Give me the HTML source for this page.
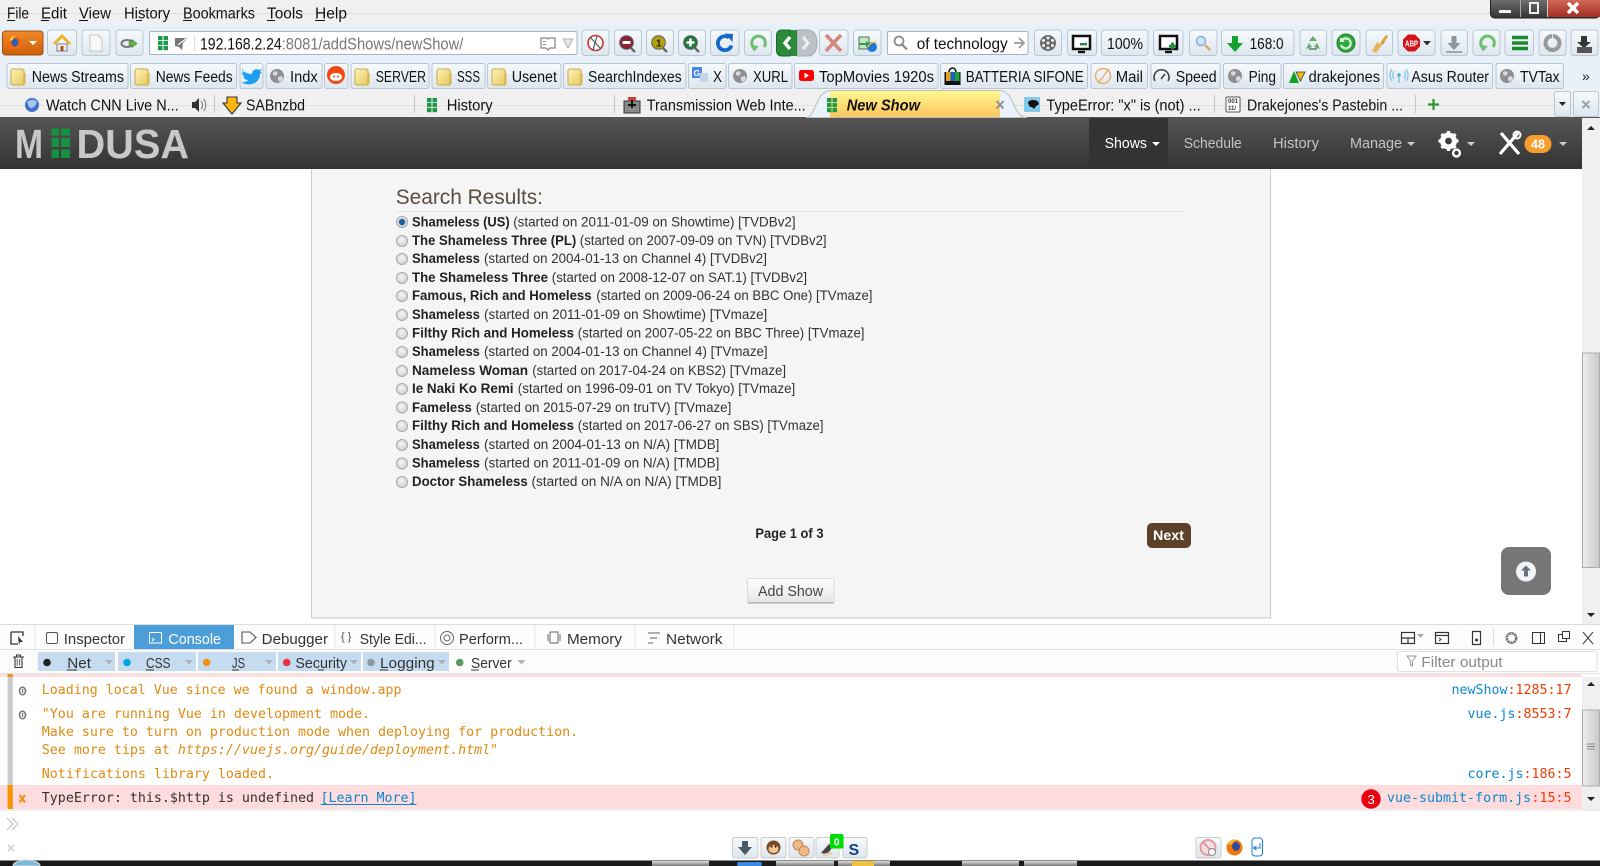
<!DOCTYPE html>
<html lang="en"><head><meta charset="utf-8"><title>New Show</title>
<style>
html,body{margin:0;padding:0;width:1600px;height:866px;overflow:hidden;background:#fff}
svg{display:block}
text{font-family:"Liberation Sans",sans-serif;white-space:pre}
.m{font-size:15.5px;fill:#111}
.b{font-size:15.5px;fill:#111}
.tb{font-size:15.5px;fill:#111}
.r{font-size:13.5px;fill:#333}
.rb{font-size:13.5px;font-weight:bold;fill:#222}
.n{font-size:14.5px;fill:#c4c4c4}
.d{font-size:15px;fill:#333}
.c{font-family:"DejaVu Sans Mono","Liberation Mono",monospace;font-size:13.3px;fill:#e08a12}
.s{font-family:"DejaVu Sans Mono","Liberation Mono",monospace;font-size:13.3px;fill:#0a88cc}
.o{font-family:"DejaVu Sans Mono","Liberation Mono",monospace;font-size:13.3px;fill:#f13c00}
</style></head><body>
<svg width="1600" height="866" viewBox="0 0 1600 866" xmlns="http://www.w3.org/2000/svg">
<defs>
<linearGradient id="btn" x1="0" y1="0" x2="0" y2="1"><stop offset="0" stop-color="#f6fafd"/><stop offset="1" stop-color="#dde6ee"/></linearGradient>
<linearGradient id="ffb" x1="0" y1="0" x2="0" y2="1"><stop offset="0" stop-color="#f08a2a"/><stop offset="1" stop-color="#cf5f08"/></linearGradient>
<linearGradient id="hdr" x1="0" y1="0" x2="0" y2="1"><stop offset="0" stop-color="#555"/><stop offset="1" stop-color="#333"/></linearGradient>
<linearGradient id="yel" x1="0" y1="0" x2="0" y2="1"><stop offset="0" stop-color="#fff68e"/><stop offset="1" stop-color="#fdc661"/></linearGradient>
<linearGradient id="fold" x1="0" y1="0" x2="1" y2="1"><stop offset="0" stop-color="#fdf3b8"/><stop offset="1" stop-color="#e8c860"/></linearGradient>
<linearGradient id="win" x1="0" y1="0" x2="0" y2="1"><stop offset="0" stop-color="#777"/><stop offset="1" stop-color="#333"/></linearGradient>
<linearGradient id="wred" x1="0" y1="0" x2="0" y2="1"><stop offset="0" stop-color="#d26a5c"/><stop offset="1" stop-color="#a32f22"/></linearGradient>
<linearGradient id="add" x1="0" y1="0" x2="0" y2="1"><stop offset="0" stop-color="#fff"/><stop offset="1" stop-color="#e4e4e4"/></linearGradient>
<linearGradient id="scr" x1="0" y1="0" x2="1" y2="0"><stop offset="0" stop-color="#eee"/><stop offset="1" stop-color="#c8c8c8"/></linearGradient>
<linearGradient id="tk" x1="0" y1="0" x2="0" y2="1"><stop offset="0" stop-color="#ddd"/><stop offset="1" stop-color="#777"/></linearGradient>
<radialGradient id="rad" cx=".45" cy=".4" r=".7"><stop offset="0" stop-color="#f4f4f4"/><stop offset=".7" stop-color="#d8d8d8"/><stop offset="1" stop-color="#bbb"/></radialGradient>
<g id="folder"><path d="M0 3a2 2 0 0 1 2-2h9a2 2 0 0 1 2 2v14H2a2 2 0 0 1-2-2z" fill="url(#fold)" stroke="#c9a94a"/><rect x="13" y="5" width="1.6" height="11" fill="#d8b850"/></g>
<g id="globe"><circle cx="7" cy="7" r="7" fill="#8d8f92"/><path d="M3 3l3-1 2 2-2 3-3-1zM8 8l4-1 1 3-3 3-2-2z" fill="#d8dadc"/></g>
<g id="grid"><rect x="0" y="0" width="4.5" height="4.2" fill="#1c9a4a"/><rect x="5.5" y="0" width="4.5" height="4.2" fill="#1c9a4a"/><rect x="0" y="5" width="4.5" height="4.2" fill="#1c9a4a"/><rect x="5.5" y="5" width="4.5" height="4.2" fill="#1c9a4a"/><rect x="0" y="10" width="4.5" height="4.2" fill="#1c9a4a"/><rect x="5.5" y="10" width="4.5" height="4.2" fill="#1c9a4a"/></g>
</defs>

<!-- chrome background -->
<rect width="1600" height="23" fill="#f0f0f0"/>
<rect y="13" width="1490" height="1" fill="#e0e0e0"/>
<rect y="23" width="1600" height="66" fill="#e8f1fa"/>
<rect y="89" width="1600" height="29" fill="#f0f0f0"/>
<rect y="105" width="1600" height="1" fill="#e2e2e2"/>
<rect y="117" width="1600" height="1" fill="#555"/>

<!-- menu -->
<text class="m" x="7" y="18.5" textLength="22" lengthAdjust="spacingAndGlyphs">File</text>
<text class="m" x="41" y="18.5" textLength="26" lengthAdjust="spacingAndGlyphs">Edit</text>
<text class="m" x="79" y="18.5" textLength="32" lengthAdjust="spacingAndGlyphs">View</text>
<text class="m" x="124" y="18.5" textLength="46" lengthAdjust="spacingAndGlyphs">History</text>
<text class="m" x="183" y="18.5" textLength="72" lengthAdjust="spacingAndGlyphs">Bookmarks</text>
<text class="m" x="267" y="18.5" textLength="36" lengthAdjust="spacingAndGlyphs">Tools</text>
<text class="m" x="315" y="18.5" textLength="32" lengthAdjust="spacingAndGlyphs">Help</text>
<path d="M7 20.5h8M41 20.5h8M79 20.5h9M136 20.5h6M183 20.5h9M267 20.5h8M315 20.5h10" stroke="#111" stroke-width="1" fill="none"/>

<!-- window buttons -->
<rect x="1490.5" y="-3" width="109" height="21" rx="4" fill="url(#win)" stroke="#222"/>
<rect x="1547" y="-1" width="53" height="18" fill="url(#wred)"/>
<rect x="1520" y="0" width="1" height="17" fill="#aaa"/><rect x="1547" y="0" width="1" height="17" fill="#ccc"/>
<rect x="1499" y="10" width="12" height="3" fill="#eee"/>
<rect x="1530" y="3" width="8" height="10" fill="none" stroke="#eee" stroke-width="2"/>
<path d="M1568 3l10 10M1578 3l-10 10" stroke="#fff" stroke-width="3.4"/>

<!-- nav toolbar -->
<rect x="2.5" y="31" width="40.500" height="24" rx="3" fill="url(#ffb)" stroke="#9a4d10"/>
<circle cx="14" cy="43" r="7" fill="#f26a10"/><ellipse cx="15" cy="42.500" rx="3.500" ry="4" fill="#2f5fb0"/><path d="M9 41c1-4 4-6 7-5-2 1-3 2-3 4z" fill="#f9c23c"/>
<path d="M29 41h8l-4 4z" fill="#fff"/>
<g fill="url(#btn)" stroke="#bcc6d0">
<rect x="47.500" y="30" width="29" height="25.500" rx="3"/><rect x="82" y="30" width="28" height="25.500" rx="3"/><rect x="116" y="30" width="27" height="25.500" rx="3"/>
<rect x="582" y="30" width="27" height="25.500" rx="3"/><rect x="614.500" y="30" width="27" height="25.500" rx="3"/><rect x="646.500" y="30" width="27" height="25.500" rx="3"/><rect x="678.500" y="30" width="27" height="25.500" rx="3"/><rect x="710.500" y="30" width="28.500" height="25.500" rx="3"/><rect x="744.500" y="30" width="27" height="25.500" rx="3"/>
<rect x="819.500" y="30" width="28.500" height="25.500" rx="3"/><rect x="853.500" y="30" width="27.500" height="25.500" rx="3"/>
<rect x="1034.500" y="30" width="27" height="25.500" rx="3"/><rect x="1067.500" y="30" width="29" height="25.500" rx="3"/><rect x="1101.500" y="30" width="46.500" height="25.500" rx="3"/><rect x="1153.500" y="30" width="29.500" height="25.500" rx="3"/><rect x="1189.500" y="30" width="27.500" height="25.500" rx="3"/><rect x="1221.500" y="30" width="72.500" height="25.500" rx="3"/><rect x="1300" y="30" width="26.500" height="25.500" rx="3"/><rect x="1332" y="30" width="28" height="25.500" rx="3"/><rect x="1366" y="30" width="26.500" height="25.500" rx="3"/><rect x="1398" y="30" width="37" height="25.500" rx="3"/><rect x="1441" y="30" width="26.500" height="25.500" rx="3"/><rect x="1473" y="30" width="27" height="25.500" rx="3"/><rect x="1505" y="30" width="28.500" height="25.500" rx="3"/><rect x="1539" y="30" width="27" height="25.500" rx="3"/><rect x="1571" y="30" width="27" height="25.500" rx="3"/>
</g>
<!-- home/new/link icons -->
<path d="M54 44l8-8 8 8" fill="none" stroke="#eab62c" stroke-width="3"/><rect x="57" y="44" width="10" height="7" fill="#f8f0d8" stroke="#7a78b0"/><rect x="60.500" y="46" width="3" height="5" fill="#a0561c"/>
<path d="M90 35h8l4 4v12H90z" fill="#f8f8f8" stroke="#c4c4c4"/>
<ellipse cx="127" cy="43.500" rx="5.500" ry="3.500" fill="none" stroke="#777" stroke-width="2"/><path d="M129 42h3v-2.500l5 4-5 4v-2h-3z" fill="#6cb84a" stroke="#3d8a2a" stroke-width=".6"/>
<!-- url bar -->
<rect x="149.500" y="31.500" width="427.500" height="23" rx="1.500" fill="#fff" stroke="#a9b4bf"/>
<use href="#grid" x="158" y="36"/>
<path d="M175 38h13l-5 5-1 7-3-3-4-1z" fill="#777"/><path d="M178 45l9-7" stroke="#fff" stroke-width="1.200"/>
<rect x="194" y="35" width="1" height="16" fill="#ddd"/>
<text x="200" y="49.500" font-size="16.500" fill="#111" textLength="81.700" lengthAdjust="spacingAndGlyphs">192.168.2.24</text>
<text x="281.700" y="49.500" font-size="16.500" fill="#777" textLength="181.600" lengthAdjust="spacingAndGlyphs">:8081/addShows/newShow/</text>
<path d="M541 38h6l1 1 1-1h6v10h-5l-2 2-2-2h-5z" fill="#fff" stroke="#888" stroke-width="1.300"/><rect x="543" y="41" width="3" height="1" fill="#888"/><rect x="543" y="44" width="3" height="1" fill="#888"/>
<path d="M563 39h10l-5 9z" fill="#e4e8ec" stroke="#aab2ba"/>
<!-- zoom/reload icons -->
<circle cx="595.500" cy="43" r="7.500" fill="#fff" stroke="#c33" stroke-width="1.600"/><path d="M590 37l11 12M597 36l-4 14" stroke="#555" stroke-width="1.200"/>
<g stroke="#666" stroke-width="2.400"><path d="M631 48l4 4M663 48l4 4M695 48l4 4"/></g>
<circle cx="626.500" cy="42.500" r="6.800" fill="#8c2134" stroke="#5a5a5a"/><rect x="622.500" y="41" width="8" height="3" fill="#fff"/>
<circle cx="658.500" cy="42.500" r="6.800" fill="#b5a209" stroke="#5a5a5a"/><text x="656" y="46.500" font-size="10" font-weight="bold" fill="#222">1</text>
<circle cx="690.500" cy="42.500" r="6.800" fill="#1d7a3f" stroke="#5a5a5a"/><path d="M686.500 42.500h8M690.500 38.500v8" stroke="#fff" stroke-width="2.600"/>
<path d="M729 37.500a7 7 0 1 0 2.500 8" fill="none" stroke="#1568c8" stroke-width="3.800"/><path d="M725 33.500l8 .5-.5 8z" fill="#1568c8"/>
<path d="M764 47a6.800 6.800 0 1 0-10 1" fill="none" stroke="#6cc070" stroke-width="3"/><path d="M750.500 45l8.500 1-5 5.500z" fill="#6cc070"/>
<!-- back fwd -->
<path d="M790 30h-9a5 5 0 0 0-4.500 5v16a5 5 0 0 0 4.500 5h9z" fill="#2c8a3a" stroke="#1e6a2c"/>
<path d="M797 30h10c6 0 10 4 10 13s-4 13-10 13h-10z" fill="#bcc2c6" stroke="#a4aaae"/><rect x="790" y="30" width="7" height="26" fill="#2c8a3a"/>
<path d="M790 37l-5 6 5 6" fill="none" stroke="#fff" stroke-width="3.400"/><path d="M803 37l5 6-5 6" fill="none" stroke="#eef0f2" stroke-width="3"/>
<path d="M826 35l15 16M841 35l-15 16" stroke="#d58880" stroke-width="3.600"/>
<rect x="859" y="37" width="10" height="12" fill="#c9e4c4" stroke="#4a7a58"/><path d="M859 43h7v-2l4 3-4 3v-2h-7z" fill="#24a04a"/><circle cx="872" cy="47" r="5" fill="#1d78d8"/><path d="M868 47c2-5 6-5 8-5" stroke="#f6c020" fill="none" stroke-width="1.500"/>
<!-- search box -->
<rect x="887.500" y="31.500" width="140.500" height="23" rx="1.500" fill="#fff" stroke="#a9b4bf"/>
<circle cx="899" cy="41" r="4.500" fill="none" stroke="#8a8a8a" stroke-width="1.800"/><path d="M902 44.500l5 5" stroke="#8a8a8a" stroke-width="2.200"/>
<text x="916.700" y="49" font-size="16" fill="#111" textLength="91" lengthAdjust="spacingAndGlyphs">of technology</text>
<path d="M1014 43h9M1019 38l5 5-5 5" fill="none" stroke="#999" stroke-width="1.800"/>
<!-- right icons -->
<circle cx="1048" cy="43" r="8" fill="#6c6c6c"/><circle cx="1048" cy="43" r="1.500" fill="#eee"/><circle cx="1043.500" cy="40.500" r="1.500" fill="#eee"/><circle cx="1052.500" cy="40.500" r="1.500" fill="#eee"/><circle cx="1048" cy="38" r="1.500" fill="#eee"/><circle cx="1048" cy="48" r="1.500" fill="#eee"/><circle cx="1043.500" cy="45.500" r="1.500" fill="#eee"/><circle cx="1052.500" cy="45.500" r="1.500" fill="#eee"/>
<rect x="1073" y="36" width="17" height="13" fill="#fff" stroke="#111" stroke-width="2.500"/><path d="M1078 52h7" stroke="#111" stroke-width="2.400"/><rect x="1080" y="43" width="7" height="2.400" fill="#1e8a3a"/>
<text x="1107" y="49" font-size="15.500" fill="#111" textLength="36" lengthAdjust="spacingAndGlyphs">100%</text>
<rect x="1160" y="36" width="17" height="13" fill="#fff" stroke="#111" stroke-width="2.500"/><path d="M1165 52h7" stroke="#111" stroke-width="2.400"/><path d="M1169 46h7M1172.500 42.500v7" stroke="#1e8a3a" stroke-width="2.800"/>
<circle cx="1201" cy="41" r="4.500" fill="#cfe6f8" stroke="#7ab0dc" stroke-width="1.400"/><path d="M1205 45l5 5" stroke="#d8a860" stroke-width="2.400"/>
<path d="M1232 36h6v7h5l-8 9-8-9h5z" fill="#12a02e"/>
<text x="1249.600" y="49" font-size="15.500" fill="#111" textLength="34" lengthAdjust="spacingAndGlyphs">168:0</text>
<path d="M1313 36l4 5h-8zM1306 49l3-6 3 4zM1320 49l-3-6-3 4z" fill="#6aa86e"/><path d="M1309 49h8" stroke="#6aa86e" stroke-width="2"/>
<circle cx="1346" cy="43" r="9" fill="#2fa83c" stroke="#1c7a2a"/><path d="M1342 40a5 5 0 1 1-1 5" fill="none" stroke="#d6f4d6" stroke-width="2.200"/><path d="M1340 37v5h5z" fill="#d6f4d6"/>
<path d="M1372 51l5-9 5 3-6 8z" fill="#e4b658"/><path d="M1380 43l6-8 2 1-5 9z" fill="#d8a040"/>
<path d="M1408 34.500h7l5 5v7l-5 5h-7l-5-5v-7z" fill="#d4141c"/><text x="1405" y="46.500" font-size="8.500" font-weight="bold" fill="#fff" textLength="13" lengthAdjust="spacingAndGlyphs">ABP</text><path d="M1423 41h8l-4 4.500z" fill="#333"/>
<path d="M1451.500 36h5v7h4l-6.500 7-6.500-7h4z" fill="#8c979f"/><path d="M1446 52h16" stroke="#8c979f" stroke-width="1.600"/>
<path d="M1493 47a6.800 6.800 0 1 0-10 1" fill="none" stroke="#6cc070" stroke-width="3"/><path d="M1479.500 45l8.500 1-5 5.500z" fill="#6cc070"/>
<path d="M1512 37.500h16M1512 43h16M1512 48.500h16" stroke="#1e8a30" stroke-width="3.400"/>
<circle cx="1552.500" cy="43" r="7" fill="none" stroke="#999" stroke-width="4"/><path d="M1552 33h1v7h-1z" fill="#e8eef4"/>
<path d="M1581 36h6v6h4l-7 6-7-6h4z" fill="#333"/><rect x="1577" y="47" width="15" height="6" fill="#555"/>

<!-- bookmarks -->
<g fill="url(#btn)" stroke="#bcc6d0">
<rect x="7" y="63.500" width="121" height="25" rx="2"/><rect x="130.500" y="63.500" width="106" height="25" rx="2"/><rect x="240" y="63.500" width="23" height="25" rx="2"/><rect x="266" y="63.500" width="56" height="25" rx="2"/><rect x="324.500" y="63.500" width="23.500" height="25" rx="2"/><rect x="351" y="63.500" width="78" height="25" rx="2"/><rect x="432" y="63.500" width="53" height="25" rx="2"/><rect x="487.500" y="63.500" width="73.500" height="25" rx="2"/><rect x="563.500" y="63.500" width="122.500" height="25" rx="2"/><rect x="688.500" y="63.500" width="37.500" height="25" rx="2"/><rect x="728.500" y="63.500" width="63.500" height="25" rx="2"/><rect x="794.500" y="63.500" width="143.500" height="25" rx="2"/><rect x="940.500" y="63.500" width="147" height="25" rx="2"/><rect x="1091" y="63.500" width="56.500" height="25" rx="2"/><rect x="1151" y="63.500" width="69" height="25" rx="2"/><rect x="1223.500" y="63.500" width="57.500" height="25" rx="2"/><rect x="1283.500" y="63.500" width="100" height="25" rx="2"/><rect x="1387" y="63.500" width="105.500" height="25" rx="2"/><rect x="1496" y="63.500" width="67.500" height="25" rx="2"/>
</g>
<use href="#folder" x="11" y="68"/><use href="#folder" x="135" y="68"/><use href="#folder" x="355" y="68"/><use href="#folder" x="437" y="68"/><use href="#folder" x="492" y="68"/><use href="#folder" x="568" y="68"/>
<use href="#globe" x="270" y="69"/><use href="#globe" x="733" y="69"/><use href="#globe" x="1228" y="69"/><use href="#globe" x="1500" y="69"/>
<path d="M243 71c3 2 6 3 9 3 0-4 4-6 7-4l3-1-2 3 2 0-2 2c0 7-7 12-14 10-2 0-3-1-4-2 3 0 5 0 6-2-3 0-4-2-5-3h2c-2-1-3-3-3-5l2 1c-2-2-2-4-1-5z" fill="#1da1f2"/>
<circle cx="336" cy="75" r="9" fill="#f04a12"/><ellipse cx="336" cy="77" rx="6" ry="4" fill="#fff"/><circle cx="334" cy="76.500" r="1" fill="#f04a12"/><circle cx="338" cy="76.500" r="1" fill="#f04a12"/>
<rect x="692" y="67" width="10" height="11" fill="#4a86e8"/><text x="693.500" y="76" font-size="8.500" font-weight="bold" fill="#fff">G</text><rect x="700" y="73" width="8" height="9" fill="#c4d4ea"/>
<rect x="799" y="70" width="15" height="11" rx="2.500" fill="#f00"/><path d="M804.500 72.500v6l4.500-3z" fill="#fff"/>
<rect x="944.500" y="72" width="16" height="13" fill="#111"/><rect x="946" y="72" width="4.500" height="9" fill="#e8a020"/><rect x="950.500" y="72" width="4.500" height="9" fill="#1464c0"/><rect x="955" y="72" width="4.500" height="9" fill="#28a038"/><path d="M949 72a3.500 4 0 0 1 7 0" fill="none" stroke="#111" stroke-width="1.500"/>
<circle cx="1103" cy="76" r="7.500" fill="none" stroke="#f0a868" stroke-width="1.400"/><path d="M1098 83l11-14" stroke="#f0a868" stroke-width="1.400"/>
<path d="M1155 81a7.500 7.500 0 1 1 13 0" fill="none" stroke="#444" stroke-width="1.600"/><path d="M1161 79l4-5" stroke="#444" stroke-width="1.600"/>
<path d="M1289 83l5-12 5 12z" fill="#12a020"/><path d="M1296 72h9l-4.500 9z" fill="#ecc018" stroke="#333" stroke-width=".8"/>
<circle cx="1399" cy="75" r="1.700" fill="#4aa8e0"/><path d="M1394 71a7 7 0 0 0 0 8M1404 71a7 7 0 0 1 0 8M1392 69a10 10 0 0 0 0 12M1406 69a10 10 0 0 1 0 12" fill="none" stroke="#7ac0ea" stroke-width="1.200"/><path d="M1399 76v7" stroke="#7ac0ea" stroke-width="1.400"/>
<text class="b" x="31.700" y="82" textLength="92.300" lengthAdjust="spacingAndGlyphs">News Streams</text>
<text class="b" x="155.700" y="82" textLength="77" lengthAdjust="spacingAndGlyphs">News Feeds</text>
<text class="b" x="290" y="82" textLength="27.700" lengthAdjust="spacingAndGlyphs">Indx</text>
<text class="b" x="375.700" y="82" textLength="50.300" lengthAdjust="spacingAndGlyphs">SERVER</text>
<text class="b" x="457" y="82" textLength="23" lengthAdjust="spacingAndGlyphs">SSS</text>
<text class="b" x="511.700" y="82" textLength="45.300" lengthAdjust="spacingAndGlyphs">Usenet</text>
<text class="b" x="588" y="82" textLength="93.700" lengthAdjust="spacingAndGlyphs">SearchIndexes</text>
<text class="b" x="713" y="82" textLength="9" lengthAdjust="spacingAndGlyphs">X</text>
<text class="b" x="753" y="82" textLength="35" lengthAdjust="spacingAndGlyphs">XURL</text>
<text class="b" x="819" y="82" textLength="115" lengthAdjust="spacingAndGlyphs">TopMovies 1920s</text>
<text class="b" x="965.700" y="82" textLength="118" lengthAdjust="spacingAndGlyphs">BATTERIA SIFONE</text>
<text class="b" x="1115.700" y="82" textLength="27.300" lengthAdjust="spacingAndGlyphs">Mail</text>
<text class="b" x="1175.700" y="82" textLength="41" lengthAdjust="spacingAndGlyphs">Speed</text>
<text class="b" x="1248.600" y="82" textLength="27.400" lengthAdjust="spacingAndGlyphs">Ping</text>
<text class="b" x="1308.600" y="82" textLength="71.400" lengthAdjust="spacingAndGlyphs">drakejones</text>
<text class="b" x="1411.400" y="82" textLength="77.600" lengthAdjust="spacingAndGlyphs">Asus Router</text>
<text class="b" x="1520" y="82" textLength="39.600" lengthAdjust="spacingAndGlyphs">TVTax</text>
<text x="1582" y="81" font-size="14" fill="#222">»</text>

<!-- tabs -->
<circle cx="32" cy="105" r="7" fill="#3d70c8"/><path d="M27 102c3-3 8-3 10 0-1 3-3 6-6 6-2 0-3-3-4-6z" fill="#a8c4ec"/>
<text class="tb" x="46" y="110.500" textLength="132.700" lengthAdjust="spacingAndGlyphs">Watch CNN Live N...</text>
<path d="M192 102h3l4-4v14l-4-4h-3z" fill="#333"/><path d="M201 101c2 2 2 6 0 8M203.500 99c3 3 3 9 0 12" fill="none" stroke="#777"/>
<rect x="214" y="95" width="1" height="18" fill="#c4c4c4"/><rect x="414" y="95" width="1" height="18" fill="#c4c4c4"/><rect x="614" y="95" width="1" height="18" fill="#c4c4c4"/><rect x="1214" y="95" width="1" height="18" fill="#c4c4c4"/><rect x="1415" y="95" width="1" height="18" fill="#c4c4c4"/>
<path d="M227 97h10v6h4l-9 11-9-11h4z" fill="#fdb70c" stroke="#333" stroke-width="1.100"/>
<text class="tb" x="246" y="110.500" textLength="59" lengthAdjust="spacingAndGlyphs">SABnzbd</text>
<use href="#grid" x="427" y="98"/>
<text class="tb" x="446.700" y="110.500" textLength="46" lengthAdjust="spacingAndGlyphs">History</text>
<rect x="624" y="101" width="16" height="12" fill="#8a8a8a" stroke="#333"/><rect x="628" y="97" width="8" height="4" fill="#c8433a"/><path d="M632 100v8M628 105h8" stroke="#111" stroke-width="2"/>
<text class="tb" x="646.700" y="110.500" textLength="159" lengthAdjust="spacingAndGlyphs">Transmission Web Inte...</text>
<path d="M806 117.500C816 117.500 815 91 831 90.500H1000C1015 91 1012 117.500 1027 117.500Z" fill="#eaf3fb" stroke="#bdbdbd"/>
<rect x="830" y="91" width="170" height="26" fill="url(#yel)"/>
<use href="#grid" x="827" y="98"/>
<text x="846.700" y="110.500" font-size="15.500" font-weight="bold" font-style="italic" fill="#111" textLength="73.300" lengthAdjust="spacingAndGlyphs">New Show</text>
<path d="M996.500 101l7 7.500M1003.500 101l-7 7.500" stroke="#8a8f95" stroke-width="2"/>
<rect x="1024" y="97" width="16" height="15" fill="#84c8ec"/><path d="M1028 103c0-3 6-4 9-2s2 4-1 5l-2 3-2-2h-2z" fill="#111"/>
<text class="tb" x="1046.400" y="110.500" textLength="154.300" lengthAdjust="spacingAndGlyphs">TypeError: "x" is (not) ...</text>
<rect x="1226" y="97" width="14" height="15" rx="1" fill="#fff" stroke="#555"/><text x="1228" y="103" font-size="6" font-weight="bold" fill="#333">001</text><text x="1228" y="110" font-size="6" font-weight="bold" fill="#333">11/</text>
<text class="tb" x="1247" y="110.500" textLength="156" lengthAdjust="spacingAndGlyphs">Drakejones's Pastebin ...</text>
<path d="M1428 104.500h11M1433.500 99v11" stroke="#2a9a30" stroke-width="2.200"/>
<rect x="1554.500" y="91.500" width="16" height="25" rx="2" fill="url(#btn)" stroke="#bcc6d0"/><path d="M1559 102h7l-3.500 4z" fill="#222"/>
<rect x="1573.500" y="91.500" width="25" height="25" rx="2" fill="url(#btn)" stroke="#bcc6d0"/><path d="M1582.500 101l7 7M1589.500 101l-7 7" stroke="#9aa2aa" stroke-width="2"/>

<!-- page -->
<rect y="118" width="1582" height="506" fill="#fff"/>
<rect x="311.500" y="160" width="959" height="458" fill="#f5f5f5" stroke="#ccc"/>
<rect y="118" width="1582" height="51" fill="url(#hdr)"/>
<rect x="1089" y="118" width="79" height="51" fill="#333"/>
<!-- logo -->
<text x="15" y="158" font-size="41" font-weight="bold" fill="#c8c8c8" textLength="28" lengthAdjust="spacingAndGlyphs">M</text>
<g fill="#15913f"><rect x="51.500" y="128.500" width="7.500" height="7"/><rect x="61" y="128.500" width="9" height="7"/><rect x="51.500" y="138" width="7.500" height="9"/><rect x="61" y="138" width="9" height="9"/><rect x="51.500" y="149.500" width="7.500" height="8.500"/><rect x="61" y="149.500" width="9" height="8.500"/></g>
<text x="76.500" y="158" font-size="41" font-weight="bold" fill="#c8c8c8" textLength="112.500" lengthAdjust="spacingAndGlyphs">DUSA</text>
<!-- nav -->
<text class="n" x="1104.600" y="148" style="fill:#fff" textLength="42.400" lengthAdjust="spacingAndGlyphs">Shows</text>
<path d="M1152 142h8l-4 4z" fill="#fff"/>
<text class="n" x="1183.700" y="148" textLength="58.100" lengthAdjust="spacingAndGlyphs">Schedule</text>
<text class="n" x="1273" y="148" textLength="46" lengthAdjust="spacingAndGlyphs">History</text>
<text class="n" x="1350" y="148" textLength="52" lengthAdjust="spacingAndGlyphs">Manage</text>
<path d="M1407 142h8l-4 4z" fill="#ccc"/>
<circle cx="1448.500" cy="141" r="6" fill="none" stroke="#fff" stroke-width="5"/><path d="M1448.500 131v20M1438.500 141h20M1441.500 134l14 14M1455.500 134l-14 14" stroke="#fff" stroke-width="3.200"/><circle cx="1448.500" cy="141" r="3.400" fill="#3f3f3f"/>
<circle cx="1456.500" cy="153" r="3.400" fill="none" stroke="#fff" stroke-width="2.400"/>
<path d="M1467 142h8l-4 4z" fill="#ccc"/>
<path d="M1501 133l18 21M1518 133l-18 21" stroke="#fff" stroke-width="3.200"/><circle cx="1517" cy="135" r="3.500" fill="none" stroke="#fff" stroke-width="2"/>
<rect x="1524.500" y="135" width="27" height="18" rx="9" fill="#f89c2c"/><text x="1531" y="148.500" font-size="13" font-weight="bold" fill="#fff" textLength="14" lengthAdjust="spacingAndGlyphs">48</text>
<path d="M1559 142h8l-4 4z" fill="#ccc"/>
<!-- results -->
<text x="395.700" y="204" font-size="21.500" fill="#5a4d42" textLength="147.300" lengthAdjust="spacingAndGlyphs">Search Results:</text>
<rect x="396" y="211" width="790" height="1" fill="#e5e5e5"/>
<g fill="url(#rad)" stroke="#a8a8a8"><circle cx="402" cy="222" r="5.500"/><circle cx="402" cy="241" r="5.500"/><circle cx="402" cy="259" r="5.500"/><circle cx="402" cy="278" r="5.500"/><circle cx="402" cy="296" r="5.500"/><circle cx="402" cy="315" r="5.500"/><circle cx="402" cy="333.500" r="5.500"/><circle cx="402" cy="352" r="5.500"/><circle cx="402" cy="371" r="5.500"/><circle cx="402" cy="389" r="5.500"/><circle cx="402" cy="407.500" r="5.500"/><circle cx="402" cy="426" r="5.500"/><circle cx="402" cy="445" r="5.500"/><circle cx="402" cy="463.500" r="5.500"/><circle cx="402" cy="482" r="5.500"/></g>
<circle cx="402" cy="222" r="3.200" fill="#1a5f9a"/>
<text class="rb" x="412" y="226.500" textLength="97.700" lengthAdjust="spacingAndGlyphs">Shameless (US)</text><text class="r" x="513.200" y="226.500" textLength="282.400" lengthAdjust="spacingAndGlyphs">(started on 2011-01-09 on Showtime) [TVDBv2]</text>
<text class="rb" x="412" y="245" textLength="164.300" lengthAdjust="spacingAndGlyphs">The Shameless Three (PL)</text><text class="r" x="579.800" y="245" textLength="246.800" lengthAdjust="spacingAndGlyphs">(started on 2007-09-09 on TVN) [TVDBv2]</text>
<text class="rb" x="412" y="263" textLength="67.900" lengthAdjust="spacingAndGlyphs">Shameless</text><text class="r" x="484" y="263" textLength="282.900" lengthAdjust="spacingAndGlyphs">(started on 2004-01-13 on Channel 4) [TVDBv2]</text>
<text class="rb" x="412" y="282" textLength="136" lengthAdjust="spacingAndGlyphs">The Shameless Three</text><text class="r" x="551.800" y="282" textLength="255.200" lengthAdjust="spacingAndGlyphs">(started on 2008-12-07 on SAT.1) [TVDBv2]</text>
<text class="rb" x="412" y="300" textLength="179.600" lengthAdjust="spacingAndGlyphs">Famous, Rich and Homeless</text><text class="r" x="596.200" y="300" textLength="276.300" lengthAdjust="spacingAndGlyphs">(started on 2009-06-24 on BBC One) [TVmaze]</text>
<text class="rb" x="412" y="319" textLength="67.900" lengthAdjust="spacingAndGlyphs">Shameless</text><text class="r" x="484" y="319" textLength="283.300" lengthAdjust="spacingAndGlyphs">(started on 2011-01-09 on Showtime) [TVmaze]</text>
<text class="rb" x="412" y="337.500" textLength="162" lengthAdjust="spacingAndGlyphs">Filthy Rich and Homeless</text><text class="r" x="577.800" y="337.500" textLength="286.700" lengthAdjust="spacingAndGlyphs">(started on 2007-05-22 on BBC Three) [TVmaze]</text>
<text class="rb" x="412" y="356" textLength="67.900" lengthAdjust="spacingAndGlyphs">Shameless</text><text class="r" x="484" y="356" textLength="283.600" lengthAdjust="spacingAndGlyphs">(started on 2004-01-13 on Channel 4) [TVmaze]</text>
<text class="rb" x="412" y="375" textLength="116" lengthAdjust="spacingAndGlyphs">Nameless Woman</text><text class="r" x="532.300" y="375" textLength="253.700" lengthAdjust="spacingAndGlyphs">(started on 2017-04-24 on KBS2) [TVmaze]</text>
<text class="rb" x="412" y="393" textLength="101.500" lengthAdjust="spacingAndGlyphs">Ie Naki Ko Remi</text><text class="r" x="517.800" y="393" textLength="277.400" lengthAdjust="spacingAndGlyphs">(started on 1996-09-01 on TV Tokyo) [TVmaze]</text>
<text class="rb" x="412" y="412" textLength="59.800" lengthAdjust="spacingAndGlyphs">Fameless</text><text class="r" x="475.700" y="412" textLength="255.600" lengthAdjust="spacingAndGlyphs">(started on 2015-07-29 on truTV) [TVmaze]</text>
<text class="rb" x="412" y="430" textLength="162" lengthAdjust="spacingAndGlyphs">Filthy Rich and Homeless</text><text class="r" x="577.800" y="430" textLength="245.700" lengthAdjust="spacingAndGlyphs">(started on 2017-06-27 on SBS) [TVmaze]</text>
<text class="rb" x="412" y="449" textLength="67.900" lengthAdjust="spacingAndGlyphs">Shameless</text><text class="r" x="484" y="449" textLength="235.400" lengthAdjust="spacingAndGlyphs">(started on 2004-01-13 on N/A) [TMDB]</text>
<text class="rb" x="412" y="467.500" textLength="67.900" lengthAdjust="spacingAndGlyphs">Shameless</text><text class="r" x="484" y="467.500" textLength="235.400" lengthAdjust="spacingAndGlyphs">(started on 2011-01-09 on N/A) [TMDB]</text>
<text class="rb" x="412" y="486" textLength="115.700" lengthAdjust="spacingAndGlyphs">Doctor Shameless</text><text class="r" x="531.500" y="486" textLength="189.900" lengthAdjust="spacingAndGlyphs">(started on N/A on N/A) [TMDB]</text>

<text x="755.400" y="538" font-size="13.500" font-weight="bold" fill="#222" textLength="68.100" lengthAdjust="spacingAndGlyphs">Page 1 of 3</text>
<rect x="1147" y="523" width="44" height="25" rx="5" fill="#5b4128"/>
<text x="1153" y="540" font-size="13.500" font-weight="bold" fill="#fff" textLength="31" lengthAdjust="spacingAndGlyphs">Next</text>
<rect x="747.500" y="578.500" width="86.500" height="25" rx="2" fill="url(#add)" stroke="#dcdcdc"/><rect x="748" y="602" width="86" height="1.500" fill="#bbb"/>
<text x="758" y="596" font-size="15" fill="#444" textLength="65" lengthAdjust="spacingAndGlyphs">Add Show</text>
<!-- back to top -->
<rect x="1501" y="547" width="50" height="48" rx="8" fill="#777"/>
<circle cx="1526" cy="571.500" r="10" fill="#f1f3f6"/><path d="M1526 565.500l5 5h-3v6h-4v-6h-3z" fill="#66707a"/>
<!-- page scrollbar -->
<rect x="1582" y="118" width="18" height="506" fill="#f0f0f0"/>
<rect x="1582.500" y="353" width="17" height="214.500" fill="url(#scr)" stroke="#aaa"/>
<path d="M1587 130h8l-4-4zM1587 613h8l-4 4z" fill="#222"/>

<!-- devtools -->
<rect y="624" width="1600" height="242" fill="#fff"/>
<rect y="624" width="1600" height="1" fill="#dcdcdc"/>
<rect y="625" width="1600" height="24" fill="#fcfcfc"/>
<rect y="649" width="1600" height="1" fill="#e0e0e0"/>
<rect y="650" width="1600" height="23.500" fill="#fcfcfc"/>
<rect y="673" width="1582" height="4" fill="#fddede"/><rect y="673" width="1600" height="1" fill="#e6e6e6"/>
<rect x="134" y="625" width="100" height="24" fill="#4c9ed9"/>
<g fill="#e8e8e8"><rect x="34.500" y="625" width="1" height="24"/><rect x="334.500" y="625" width="1" height="24"/><rect x="434.500" y="625" width="1" height="24"/><rect x="534.500" y="625" width="1" height="24"/><rect x="634.500" y="625" width="1" height="24"/><rect x="733.500" y="625" width="1" height="24"/></g>
<path d="M11 632h12v4M11 632v12h7" fill="none" stroke="#333" stroke-width="1.300"/><path d="M18 636l5 6-3 0-1 3z" fill="#333"/>
<rect x="46.500" y="632.500" width="11" height="11" rx="1.500" fill="none" stroke="#555"/>
<text class="d" x="63.800" y="644" textLength="61.200" lengthAdjust="spacingAndGlyphs">Inspector</text>
<rect x="149.500" y="632.500" width="12" height="10.500" fill="none" stroke="#fff"/><path d="M152 638l2 1.500-2 1.500" stroke="#fff" fill="none"/>
<text class="d" x="168.400" y="644" style="fill:#fff" textLength="52.600" lengthAdjust="spacingAndGlyphs">Console</text>
<path d="M242 632h8l6 5.500-6 5.500h-8z" fill="none" stroke="#555" stroke-width="1.100"/>
<text class="d" x="261.700" y="644" textLength="66.300" lengthAdjust="spacingAndGlyphs">Debugger</text>
<text x="341" y="640" font-size="11" fill="#555">{ }</text>
<text class="d" x="359.700" y="644" textLength="66.800" lengthAdjust="spacingAndGlyphs">Style Edi...</text>
<circle cx="447" cy="638" r="6.500" fill="none" stroke="#666"/><circle cx="447" cy="638" r="3" fill="none" stroke="#666"/>
<text class="d" x="459" y="644" textLength="64" lengthAdjust="spacingAndGlyphs">Perform...</text>
<rect x="550" y="632" width="8" height="11" fill="none" stroke="#666"/><path d="M548 634v7M560 634v7" stroke="#666"/>
<text class="d" x="567" y="644" textLength="55" lengthAdjust="spacingAndGlyphs">Memory</text>
<path d="M648 633h12M650 638h7M648 643h5" stroke="#666"/>
<text class="d" x="666" y="644" textLength="56.500" lengthAdjust="spacingAndGlyphs">Network</text>
<!-- devtools right icons -->
<g fill="none" stroke="#333" stroke-width="1.200"><rect x="1401.500" y="632.500" width="13" height="11"/><path d="M1401.500 638h13M1408 638v5"/><rect x="1435.500" y="632.500" width="13" height="11"/><path d="M1435.500 635.500h13"/><rect x="1472.500" y="631.500" width="8" height="13"/></g>
<path d="M1417 634h7l-3.500 4z" fill="#aaa"/><path d="M1439 638l2 1.500-2 1.500" stroke="#333" fill="none"/><circle cx="1476.500" cy="640" r="1.500" fill="#333"/>
<rect x="1493" y="628" width="1" height="18" fill="#ddd"/>
<circle cx="1511.500" cy="638" r="4.500" fill="none" stroke="#666" stroke-width="2.200" stroke-dasharray="2 1"/><circle cx="1511.500" cy="638" r="5.500" fill="none" stroke="#888"/>
<rect x="1532.500" y="632.500" width="12" height="11" fill="none" stroke="#333"/><rect x="1540" y="632.500" width="1" height="11" fill="#333"/>
<rect x="1558.500" y="634.500" width="8" height="7" fill="#fff" stroke="#333"/><rect x="1562.500" y="631.500" width="7" height="7" fill="#fff" stroke="#333"/>
<path d="M1583 632l10 12M1593 632l-10 12" stroke="#444" stroke-width="1.100"/>
<!-- filter row -->
<path d="M13 657h11M15 657v10.500h7V657M16.500 657v-2h4v2" fill="none" stroke="#333" stroke-width="1.100"/><path d="M17.200 659v6.500M19.700 659v6.500" stroke="#333" stroke-width=".8"/>
<g fill="#c5dcf0"><rect x="37.800" y="652" width="77.200" height="19"/><rect x="118" y="652" width="78" height="19"/><rect x="198" y="652" width="78" height="19"/><rect x="278" y="652" width="83" height="19"/><rect x="363" y="652" width="86" height="19"/></g>
<circle cx="47" cy="662.500" r="3.800" fill="#222"/><circle cx="127" cy="662.500" r="3.800" fill="#00a8e0"/><circle cx="206.600" cy="662.500" r="3.800" fill="#f09018"/><circle cx="286.700" cy="662.500" r="3.800" fill="#e8333c"/><circle cx="371" cy="662.500" r="3.800" fill="#8c9aa4"/><circle cx="459.700" cy="662.500" r="3.800" fill="#5a9a5a"/>
<text class="d" x="67.300" y="668" textLength="23.700" lengthAdjust="spacingAndGlyphs">Net</text>
<text class="d" x="146" y="668" textLength="24.400" lengthAdjust="spacingAndGlyphs">CSS</text>
<text class="d" x="232" y="668" textLength="13" lengthAdjust="spacingAndGlyphs">JS</text>
<text class="d" x="295.400" y="668" textLength="51.600" lengthAdjust="spacingAndGlyphs">Security</text>
<text class="d" x="380" y="668" textLength="54.700" lengthAdjust="spacingAndGlyphs">Logging</text>
<text class="d" x="471" y="668" textLength="40.700" lengthAdjust="spacingAndGlyphs">Server</text>
<path d="M67 670h10M146 670h8M232 670h7M318 670h6M380 670h8M471 670h8" stroke="#333"/>
<g fill="#aab2ba"><path d="M105 660h8l-4 4.500zM185 660h8l-4 4.500zM265 660h8l-4 4.500zM350 660h8l-4 4.500zM438 660h8l-4 4.500zM517.500 660h8l-4 4.500z"/></g>
<rect x="1397.500" y="651.500" width="199.500" height="20" rx="2" fill="#fff" stroke="#e0e0e0"/>
<path d="M1407 656h9l-3.500 5v5l-2-1v-4z" fill="none" stroke="#999"/>
<text x="1421.400" y="667" font-size="15" fill="#888" textLength="81.200" lengthAdjust="spacingAndGlyphs">Filter output</text>
<!-- console -->
<rect x="7.600" y="674" width="5.200" height="3.500" fill="#f09018"/>
<rect x="7.600" y="677" width="5.200" height="108" fill="#ccc"/>
<rect y="785" width="1582" height="24" fill="#fedcde"/>
<rect x="7.600" y="785" width="5.200" height="24" fill="#f59300"/>
<rect y="809.500" width="1600" height="1" fill="#ddd"/>
<ellipse cx="22.500" cy="691" rx="3" ry="3.800" fill="none" stroke="#777" stroke-width="1.600"/><rect x="22" y="689" width="1.200" height="4" fill="#777"/>
<ellipse cx="22.500" cy="715" rx="3" ry="3.800" fill="none" stroke="#777" stroke-width="1.600"/><rect x="22" y="713" width="1.200" height="4" fill="#777"/>
<text class="c" x="41.800" y="694" textLength="359.700" lengthAdjust="spacingAndGlyphs">Loading local Vue since we found a window.app</text>
<text class="c" x="41.800" y="718">"You are running Vue in development mode.</text>
<text class="c" x="41.800" y="736">Make sure to turn on production mode when deploying for production.</text>
<text class="c" x="41.800" y="754">See more tips at <tspan font-style="italic">https://vuejs.org/guide/deployment.html</tspan>"</text>
<text class="c" x="41.800" y="778">Notifications library loaded.</text>
<path d="M19.500 795l5.500 7.500M25 795l-5.500 7.500" stroke="#f0900c" stroke-width="2"/>
<text class="c" x="41.800" y="802" style="fill:#333">TypeError: this.$http is undefined</text>
<text class="s" x="320.500" y="802" textLength="96" lengthAdjust="spacingAndGlyphs">[Learn More]</text>
<rect x="320.500" y="804" width="96" height="1" fill="#0a88cc"/>
<text class="s" x="1451.500" y="694">newShow</text><text class="o" x="1507.500" y="694">:1285:17</text>
<text class="s" x="1467.500" y="718">vue.js</text><text class="o" x="1515.500" y="718">:8553:7</text>
<text class="s" x="1467.500" y="778">core.js</text><text class="o" x="1523.500" y="778">:186:5</text>
<circle cx="1371" cy="799" r="9.700" fill="#e80010"/><text x="1367.500" y="804" font-size="13" fill="#fff">3</text>
<text class="s" x="1387" y="802">vue-submit-form.js</text><text class="o" x="1531.500" y="802">:15:5</text>
<rect x="1582" y="677" width="18" height="132" fill="#f0f0f0"/>
<rect x="1582.500" y="710" width="17" height="76" fill="url(#scr)" stroke="#aaa"/>
<path d="M1587 686h8l-4-4zM1587 797h8l-4 4z" fill="#222"/><path d="M1587 744h8M1587 746.500h8M1587 749h8" stroke="#888"/>
<path d="M7 818l6 6-6 6M12 818l6 6-6 6" fill="none" stroke="#bbb"/>
<path d="M8 845l6 6M14 845l-6 6" stroke="#c4c4c4" stroke-width="1.200"/>
<!-- addon bar -->
<g fill="url(#btn)" stroke="#ccc"><rect x="732.500" y="837.500" width="25.500" height="20.500" rx="2"/><rect x="761" y="837.500" width="25" height="20.500" rx="2"/><rect x="789" y="837.500" width="25" height="20.500" rx="2"/><rect x="816" y="837.500" width="23" height="20.500" rx="2"/><rect x="843" y="837.500" width="24" height="20.500" rx="2"/><rect x="1196" y="837.500" width="25" height="20.500" rx="2"/></g>
<path d="M742 841h6v6h4l-7 8-7-8h4z" fill="#4a5a6a"/>
<circle cx="773.500" cy="847.500" r="7" fill="#7a4a20"/><ellipse cx="773.500" cy="849" rx="5" ry="4" fill="#f0c890"/><circle cx="771.500" cy="846.500" r="1" fill="#111"/><circle cx="775.500" cy="846.500" r="1" fill="#111"/>
<circle cx="798" cy="845" r="5" fill="#efb884" stroke="#c08858"/><circle cx="804" cy="851" r="5" fill="#efb884" stroke="#c08858"/>
<path d="M821 853l8-9 4 3-6 7z" fill="#444"/><path d="M822 854l9-2 2 2-9 2z" fill="#e8c8a0"/>
<rect x="830" y="834" width="13.500" height="14.500" rx="1.500" fill="#00dc00"/><text x="833.700" y="845.500" font-size="10.500" font-weight="bold" fill="#fff">0</text>
<text x="848.500" y="855" font-size="16" font-weight="bold" fill="#143f8c">S</text>
<circle cx="1208" cy="847.500" r="7.500" fill="#f4e0e0" stroke="#e09aa0" stroke-width="2"/><path d="M1203 842l10 11" stroke="#e09aa0" stroke-width="2"/><circle cx="1212" cy="852" r="3.500" fill="#fff" stroke="#888"/>
<circle cx="1234.500" cy="847.500" r="8" fill="#f2780e"/><ellipse cx="1236" cy="846.500" rx="4" ry="4.500" fill="#2a4f9a"/><path d="M1228 845c1-4 5-6 8-5-2 1-4 2-4 4z" fill="#f9c23c"/>
<rect x="1252" y="838" width="10.500" height="18" rx="3" fill="#fff" stroke="#1a78e0"/><path d="M1260 843v5h-6M1256.500 846l-3 2 3 2" fill="none" stroke="#1a78e0"/>
<!-- taskbar -->
<rect y="860" width="1600" height="6" fill="#1a1a1a"/><rect y="860" width="1600" height="1" fill="#8c8c8c"/>
<path d="M13 866a13.500 6 0 0 1 27 0z" fill="#7ab8dc" stroke="#ddd"/>
<g fill="url(#tk)"><rect x="652" y="861" width="57" height="5"/><rect x="776" y="861" width="58" height="5"/><rect x="838" y="861" width="52" height="5"/><rect x="962" y="861" width="57" height="5"/><rect x="1024" y="861" width="53" height="5"/></g>
<rect x="737" y="862" width="25" height="4" rx="2" fill="#3a8ae0"/><rect x="852" y="861" width="22" height="5" fill="#f0c040"/>
</svg>
</body></html>
